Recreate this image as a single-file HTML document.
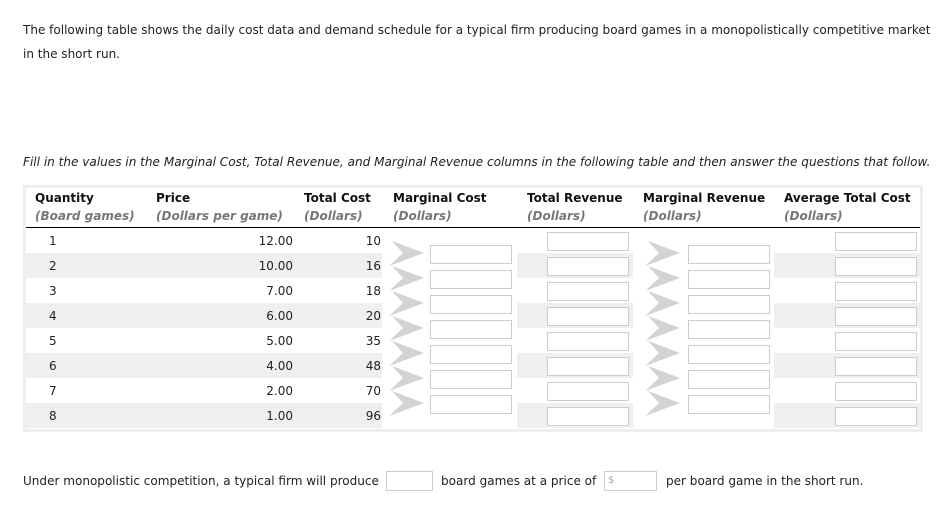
<!DOCTYPE html>
<html><head><meta charset="utf-8"><style>
body{margin:0;width:951px;height:515px;background:#fff;font-family:"DejaVu Sans","Liberation Sans",sans-serif;font-size:12px;color:#222;position:relative;overflow:hidden}
.a{position:absolute;white-space:nowrap}
.b{font-weight:bold;color:#111}
.i{font-style:italic;font-weight:bold;color:#777}
.inp{position:absolute;width:80px;height:17px;border:1px solid #ccc;background:#fff}
.sh{position:absolute;background:#efefef}
.r{text-align:right}
.t{font-size:12.02px}
</style></head><body>
<div class="a t" style="left:23px;top:23px">The following table shows the daily cost data and demand schedule for a typical firm producing board games in a monopolistically competitive market</div>
<div class="a t" style="left:23px;top:47px">in the short run.</div>
<div class="a" style="left:23px;top:155px;font-style:italic;font-size:12.07px">Fill in the values in the Marginal Cost, Total Revenue, and Marginal Revenue columns in the following table and then answer the questions that follow.</div>

<div style="position:absolute;left:23px;top:185px;width:894px;height:241px;border:3px solid #eee;background:#fff"></div>
<div style="position:absolute;left:26px;top:227px;width:894px;height:1px;background:#000"></div>

<div class="a b" style="left:35px;top:191px">Quantity</div>
<div class="a i" style="left:35px;top:209px">(Board games)</div>
<div class="a b" style="left:156px;top:191px">Price</div>
<div class="a i" style="left:156px;top:209px">(Dollars per game)</div>
<div class="a b" style="left:304px;top:191px">Total Cost</div>
<div class="a i" style="left:304px;top:209px">(Dollars)</div>
<div class="a b" style="left:393px;top:191px">Marginal Cost</div>
<div class="a i" style="left:393px;top:209px">(Dollars)</div>
<div class="a b" style="left:527px;top:191px">Total Revenue</div>
<div class="a i" style="left:527px;top:209px">(Dollars)</div>
<div class="a b" style="left:643px;top:191px">Marginal Revenue</div>
<div class="a i" style="left:643px;top:209px">(Dollars)</div>
<div class="a b" style="left:784px;top:191px">Average Total Cost</div>
<div class="a i" style="left:784px;top:209px">(Dollars)</div>

<div id="rows"></div>
<script>
var q=[1,2,3,4,5,6,7,8],p=["12.00","10.00","7.00","6.00","5.00","4.00","2.00","1.00"],tc=[10,16,18,20,35,48,70,96];
var h="";
for(var k=0;k<8;k++){
 var y=228+k*25;
 if(k%2==1){
  h+='<div class="sh" style="left:26px;top:'+y+'px;width:356px;height:25px"></div>';
  h+='<div class="sh" style="left:517px;top:'+y+'px;width:116px;height:25px"></div>';
  h+='<div class="sh" style="left:774px;top:'+y+'px;width:146px;height:25px"></div>';
 }
 h+='<div class="a" style="left:49px;top:'+(y+6)+'px">'+q[k]+'</div>';
 h+='<div class="a r" style="left:193px;width:100px;top:'+(y+6)+'px">'+p[k]+'</div>';
 h+='<div class="a r" style="left:300px;width:81px;top:'+(y+6)+'px">'+tc[k]+'</div>';
 h+='<div class="inp" style="left:547px;top:'+(y+4)+'px"></div>';
 h+='<div class="inp" style="left:835px;top:'+(y+4)+'px"></div>';
 if(k<7){
  var m=y+25;
  h+='<svg class="a" style="left:389px;top:'+(m-12)+'px" width="36" height="25"><polygon points="3,0 35,12 0,25 14,12" fill="#d3d3d3"/></svg>';
  h+='<svg class="a" style="left:645px;top:'+(m-12)+'px" width="36" height="25"><polygon points="3,0 35,12 0,25 14,12" fill="#d3d3d3"/></svg>';
  h+='<div class="inp" style="left:430px;top:'+(m-8)+'px"></div>';
  h+='<div class="inp" style="left:688px;top:'+(m-8)+'px"></div>';
 }
}
document.getElementById('rows').innerHTML=h;
</script>

<div class="a" style="left:23px;top:474px;font-size:12.04px">Under monopolistic competition, a typical firm will produce</div>
<div class="inp" style="left:386px;top:471px;width:45px;height:18px"></div>
<div class="a" style="left:441px;top:474px;font-size:12.04px">board games at a price of</div>
<div class="inp" style="left:604px;top:471px;width:51px;height:18px"></div>
<div class="a" style="left:608px;top:475px;color:#aaa;font-size:10px">$</div>
<div class="a" style="left:666px;top:474px;font-size:12.04px">per board game in the short run.</div>
</body></html>
